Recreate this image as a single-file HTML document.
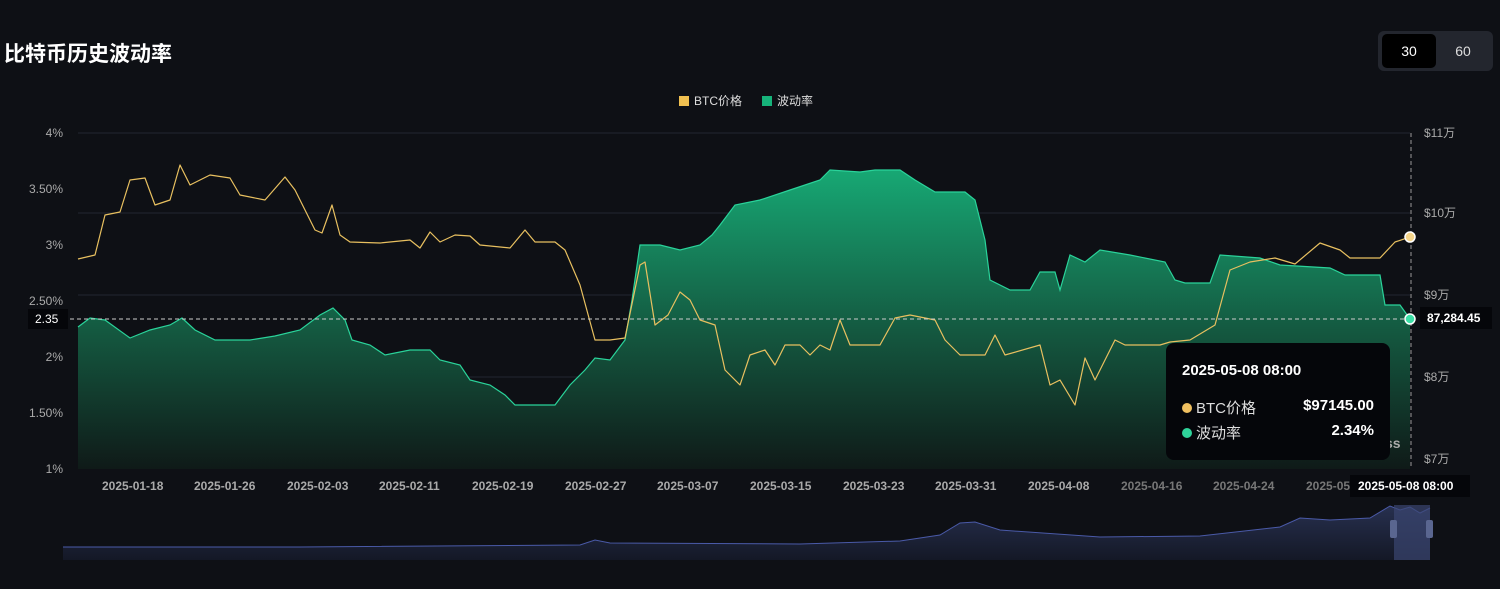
<!DOCTYPE html>
<html><head><meta charset="utf-8"><style>
body{margin:0;background:#0e1015;width:1500px;height:589px;overflow:hidden;font-family:"Liberation Sans","Noto Sans CJK SC",sans-serif;position:relative;color:#fff}
.t{position:absolute;left:4px;top:38px;font-size:21px;font-weight:bold}
.seg{position:absolute;left:1378px;top:31px;width:115px;height:40px;background:#23262e;border-radius:6px}
.seg div{position:absolute;top:3px;height:34px;line-height:34px;text-align:center;font-size:14px;width:54px}
.tt{position:absolute;left:1166px;top:343px;width:224px;height:117px;background:#05060a;border-radius:8px;font-size:15px}
.tt .d{position:absolute;left:16px;top:19px;font-weight:bold}
.row{position:absolute;left:16px;width:192px;color:#ddd}
.row b{position:absolute;right:0;color:#fff}
.dot{display:inline-block;width:10px;height:10px;border-radius:5px;margin-right:4px}
</style></head><body>
<div class="t">比特币历史波动率</div>
<div class="seg"><div style="left:4px;background:#000;border-radius:5px">30</div><div style="left:58px;color:#ddd">60</div></div>
<svg width="1500" height="589" style="position:absolute;left:0;top:0">
<defs><linearGradient id="g" x1="0" y1="0" x2="0" y2="1"><stop offset="0" stop-color="#17a874"/><stop offset="0.55" stop-color="#14573f"/><stop offset="1" stop-color="#0f1a18"/></linearGradient>
<linearGradient id="n" x1="0" y1="0" x2="0" y2="1"><stop offset="0" stop-color="#27304f"/><stop offset="1" stop-color="#141826"/></linearGradient></defs>
<g font-size="12" fill="#aaa">
<rect x="679" y="96" width="10" height="10" fill="#f0c050"/><text x="694" y="105" fill="#ddd">BTC价格</text>
<rect x="762" y="96" width="10" height="10" fill="#16b37a"/><text x="777" y="105" fill="#ddd">波动率</text>
<g stroke="#222631"><line x1="78" y1="133" x2="1410" y2="133"/><line x1="78" y1="213" x2="1410" y2="213"/><line x1="78" y1="295" x2="1410" y2="295"/><line x1="78" y1="377" x2="1410" y2="377"/><line x1="78" y1="459" x2="1410" y2="459"/></g>
<text x="63" y="137" text-anchor="end">4%</text><text x="63" y="193" text-anchor="end">3.50%</text><text x="63" y="249" text-anchor="end">3%</text><text x="63" y="305" text-anchor="end">2.50%</text><text x="63" y="361" text-anchor="end">2%</text><text x="63" y="417" text-anchor="end">1.50%</text><text x="63" y="473" text-anchor="end">1%</text>
<text x="1424" y="137">$11万</text><text x="1424" y="217">$10万</text><text x="1424" y="299">$9万</text><text x="1424" y="381">$8万</text><text x="1424" y="463">$7万</text>
</g>
<path fill="url(#g)" d="M78,469L78,327L90,318L105,320L130,338L150,330L170,325L182,318L195,330L215,340L250,340L275,336L300,330L320,315L333,308L345,320L352,340L370,345L385,355L410,350L430,350L440,360L460,365L470,380L490,385L505,395L515,405L555,405L570,385L585,370L595,358L610,360L625,340L632,300L640,245L660,245L680,250L700,245L712,235L720,225L735,205L760,200L790,190L820,180L830,170L860,172L875,170L900,170L915,180L935,192L965,192L975,200L985,240L990,280L1010,290L1030,290L1040,272L1055,272L1060,290L1070,255L1085,262L1100,250L1130,255L1165,262L1175,280L1185,283L1210,283L1220,255L1260,258L1280,265L1330,268L1345,275L1380,275L1385,305L1400,305L1410,319L1410,469Z"/>
<path fill="none" stroke="#2ad39a" stroke-width="1.2" d="M78,327L90,318L105,320L130,338L150,330L170,325L182,318L195,330L215,340L250,340L275,336L300,330L320,315L333,308L345,320L352,340L370,345L385,355L410,350L430,350L440,360L460,365L470,380L490,385L505,395L515,405L555,405L570,385L585,370L595,358L610,360L625,340L632,300L640,245L660,245L680,250L700,245L712,235L720,225L735,205L760,200L790,190L820,180L830,170L860,172L875,170L900,170L915,180L935,192L965,192L975,200L985,240L990,280L1010,290L1030,290L1040,272L1055,272L1060,290L1070,255L1085,262L1100,250L1130,255L1165,262L1175,280L1185,283L1210,283L1220,255L1260,258L1280,265L1330,268L1345,275L1380,275L1385,305L1400,305L1410,319"/>
<path fill="none" stroke="#e8c060" stroke-width="1.2" stroke-linejoin="round" d="M78,259L95,255L105,215L120,212L130,180L145,178L155,205L170,200L180,165L190,185L210,175L230,178L240,195L265,200L285,177L295,190L315,230L322,233L332,205L340,235L350,242L380,243L410,240L420,248L430,232L440,242L455,235L470,236L480,245L510,248L525,230L535,242L555,242L565,250L580,285L595,340L610,340L625,338L640,265L645,262L655,325L668,315L680,292L690,300L700,320L715,325L725,370L740,385L750,355L765,350L775,365L785,345L800,345L810,355L820,345L830,350L840,320L850,345L880,345L895,318L910,315L935,320L945,340L960,355L985,355L995,335L1005,355L1040,345L1050,385L1060,380L1075,405L1085,358L1095,380L1115,340L1125,345L1140,345L1160,345L1170,342L1190,340L1215,325L1230,270L1250,262L1275,258L1295,264L1320,243L1340,250L1350,258L1380,258L1395,242L1410,237"/>
<line x1="70" y1="319" x2="1410" y2="319" stroke="#ccc" stroke-dasharray="4,3"/>
<line x1="1411" y1="133" x2="1411" y2="469" stroke="#999" stroke-dasharray="4,3"/>
<circle cx="1410" cy="237" r="5" fill="#f5d58a" stroke="#fff" stroke-width="1.5"/>
<circle cx="1410" cy="319" r="5" fill="#3de0a8" stroke="#fff" stroke-width="1.5"/>
<rect x="28" y="309" width="40" height="20" fill="#05060a"/><text x="35" y="323" font-size="12" fill="#fff">2.35</text>
<rect x="1420" y="307" width="72" height="22" fill="#05060a"/><text x="1427" y="322" font-size="12" fill="#fff" font-weight="bold">87,284.45</text>
<g font-size="12" fill="#aaa" font-weight="bold"><text x="102" y="490">2025-01-18</text><text x="194" y="490">2025-01-26</text><text x="287" y="490">2025-02-03</text><text x="379" y="490">2025-02-11</text><text x="472" y="490">2025-02-19</text><text x="565" y="490">2025-02-27</text><text x="657" y="490">2025-03-07</text><text x="750" y="490">2025-03-15</text><text x="843" y="490">2025-03-23</text><text x="935" y="490">2025-03-31</text><text x="1028" y="490">2025-04-08</text><text x="1121" y="490" fill="#777">2025-04-16</text><text x="1213" y="490" fill="#777">2025-04-24</text><text x="1306" y="490" fill="#777">2025-05</text></g>
<rect x="1350" y="475" width="120" height="22" fill="#05060a"/><text x="1358" y="490" font-size="12" fill="#fff" font-weight="bold">2025-05-08 08:00</text>
<path fill="url(#n)" d="M63,560L63,547L300,547L580,545L595,540L610,543L800,544L900,541L940,535L960,523L975,522L1000,530L1100,537L1200,536L1280,527L1300,518L1330,520L1370,518L1390,506L1400,510L1410,507L1420,513L1430,508L1430,560Z"/>
<path fill="none" stroke="#4a5aa8" stroke-width="1" d="M63,547L300,547L580,545L595,540L610,543L800,544L900,541L940,535L960,523L975,522L1000,530L1100,537L1200,536L1280,527L1300,518L1330,520L1370,518L1390,506L1400,510L1410,507L1420,513L1430,508"/>
<rect x="1394" y="505" width="36" height="55" fill="#3a4670" opacity="0.7"/>
<rect x="1390" y="520" width="7" height="18" rx="2" fill="#5a6690"/><rect x="1426" y="520" width="7" height="18" rx="2" fill="#5a6690"/>
<text x="1385" y="448" font-size="14" fill="#aaa" font-weight="bold">ss</text>
</svg>
<div class="tt"><div class="d">2025-05-08 08:00</div>
<div class="row" style="top:54px"><span class="dot" style="background:#f0c060"></span>BTC价格<b>$97145.00</b></div>
<div class="row" style="top:79px"><span class="dot" style="background:#2fd39a"></span>波动率<b>2.34%</b></div></div>
</body></html>
